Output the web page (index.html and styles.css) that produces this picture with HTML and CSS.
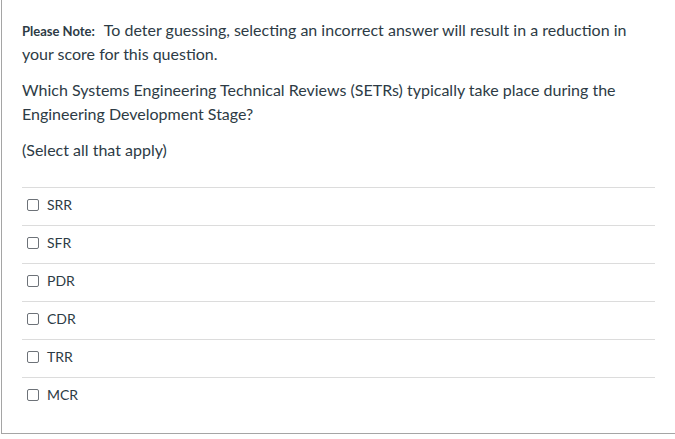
FILE: index.html
```html
<!DOCTYPE html>
<html>
<head>
<meta charset="utf-8">
<link rel="stylesheet" href="styles.css">
</head>
<body>
<div class="question">
  <p class="note"><span class="note-label">Please Note:</span>To deter guessing, selecting an incorrect answer will result in a reduction in your score for this question.</p>
  <p class="text">Which Systems Engineering Technical Reviews (SETRs) typically take place during the Engineering Development Stage?</p>
  <p class="text">(Select all that apply)</p>
  <div class="answers">
    <label class="answer"><span class="box"></span><span class="label">SRR</span></label>
    <label class="answer"><span class="box"></span><span class="label">SFR</span></label>
    <label class="answer"><span class="box"></span><span class="label">PDR</span></label>
    <label class="answer"><span class="box"></span><span class="label">CDR</span></label>
    <label class="answer"><span class="box"></span><span class="label">TRR</span></label>
    <label class="answer"><span class="box"></span><span class="label">MCR</span></label>
  </div>
</div>
</body>
</html>
```
FILE: styles.css
```css
html, body {
  margin: 0;
  padding: 0;
  background: #ffffff;
  overflow: hidden;
}
body {
  font-family: Lato, "Open Sans", sans-serif;
  color: #2d3b45;
}
.question {
  margin-left: 1px;
  width: 674px;
  height: 434px;
  box-sizing: border-box;
  border-left: 1px solid #a5a5a5;
  border-bottom: 1px solid #a5a5a5;
  padding: 18px 0 0 20px;
}
.question p {
  margin: 0 0 12px 0;
  font-size: 16px;
  line-height: 24px;
  width: 620px;
}
.note-label {
  display: inline-block;
  font-size: 13px;
  line-height: 16px;
  font-weight: bold;
  margin-right: 9px;
}
.answers {
  margin-top: 25px;
  width: 633px;
}
.answer {
  display: flex;
  align-items: center;
  border-top: 1px solid #dcdcdc;
  padding: 9px 0 12px 5px;
  height: 16px;
}
.box {
  width: 10px;
  height: 10px;
  border: 1px solid #6d7278;
  border-radius: 2px;
  margin-right: 8px;
}
.label {
  font-size: 14px;
  line-height: 16px;
}
```
